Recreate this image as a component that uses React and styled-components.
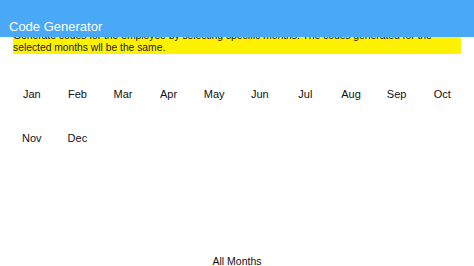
import React from "react";
import styled, { createGlobalStyle } from "styled-components";

const GlobalStyle = createGlobalStyle`
  html, body {
    margin: 0;
    padding: 0;
    background: #ffffff;
    font-family: "Liberation Sans", Arial, sans-serif;
  }
`;

const Page = styled.div`
  position: relative;
  width: 474px;
  height: 266px;
  overflow: hidden;
  background: #ffffff;
  display: flex;
  flex-direction: column;
`;

const Header = styled.header`
  position: absolute;
  top: 0;
  left: 0;
  right: 0;
  height: 37px;
  background: #4aa9f6;
  color: #ffffff;
  font-size: 13px;
  line-height: 13px;
  display: flex;
  align-items: flex-end;
  padding: 0 0 4px 9px;
  box-sizing: border-box;
  z-index: 2;
`;

const Notice = styled.p`
  margin: 30px 13px 0 13px;
  background: #fff200;
  color: #1a1a1a;
  font-size: 10.3px;
  line-height: 12px;
  padding: 0;
`;

const MonthGrid = styled.div`
  display: grid;
  grid-template-columns: repeat(10, 1fr);
  grid-auto-rows: 44px;
  margin: 18px 9px 0 9px;
`;

const Month = styled.button`
  border: none;
  background: transparent;
  font-family: "Liberation Sans", Arial, sans-serif;
  font-size: 11px;
  color: #111111;
  padding: 0;
  cursor: pointer;
`;

const Footer = styled.div`
  margin-top: auto;
  margin-bottom: -1px;
  text-align: center;
  font-size: 10.5px;
  line-height: 12px;
  color: #111111;
`;

const months = ["Jan", "Feb", "Mar", "Apr", "May", "Jun", "Jul", "Aug", "Sep", "Oct", "Nov", "Dec"];

export default function App() {
  return (
    <>
      <GlobalStyle />
      <Page>
        <Header>Code Generator</Header>
        <Notice>
          Generate codes for the employee by selecting specific months. The codes generated for the
          selected months wll be the same.
        </Notice>
        <MonthGrid>
          {months.map((m) => (
            <Month key={m}>{m}</Month>
          ))}
        </MonthGrid>
        <Footer>All Months</Footer>
      </Page>
    </>
  );
}
